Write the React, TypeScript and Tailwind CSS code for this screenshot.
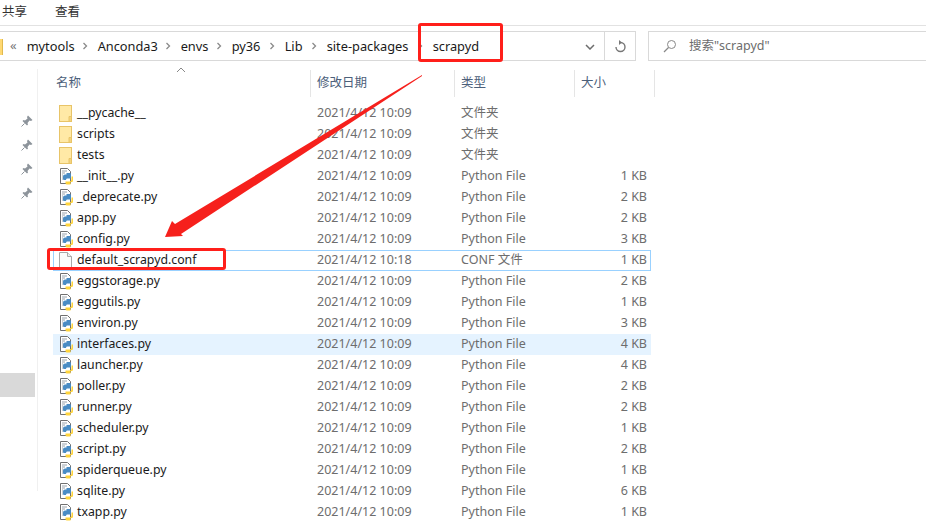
const rows: [string, string, string, string, string][] = [
  ["folder", "__pycache__", "2021/4/12 10:09", "文件夹", ""],
  ["folder", "scripts", "2021/4/12 10:09", "文件夹", ""],
  ["folder", "tests", "2021/4/12 10:09", "文件夹", ""],
  ["py", "__init__.py", "2021/4/12 10:09", "Python File", "1 KB"],
  ["py", "_deprecate.py", "2021/4/12 10:09", "Python File", "2 KB"],
  ["py", "app.py", "2021/4/12 10:09", "Python File", "2 KB"],
  ["py", "config.py", "2021/4/12 10:09", "Python File", "3 KB"],
  ["file", "default_scrapyd.conf", "2021/4/12 10:18", "CONF 文件", "1 KB"],
  ["py", "eggstorage.py", "2021/4/12 10:09", "Python File", "2 KB"],
  ["py", "eggutils.py", "2021/4/12 10:09", "Python File", "1 KB"],
  ["py", "environ.py", "2021/4/12 10:09", "Python File", "3 KB"],
  ["py", "interfaces.py", "2021/4/12 10:09", "Python File", "4 KB"],
  ["py", "launcher.py", "2021/4/12 10:09", "Python File", "4 KB"],
  ["py", "poller.py", "2021/4/12 10:09", "Python File", "2 KB"],
  ["py", "runner.py", "2021/4/12 10:09", "Python File", "2 KB"],
  ["py", "scheduler.py", "2021/4/12 10:09", "Python File", "1 KB"],
  ["py", "script.py", "2021/4/12 10:09", "Python File", "2 KB"],
  ["py", "spiderqueue.py", "2021/4/12 10:09", "Python File", "1 KB"],
  ["py", "sqlite.py", "2021/4/12 10:09", "Python File", "6 KB"],
  ["py", "txapp.py", "2021/4/12 10:09", "Python File", "1 KB"],
];
const crumbs: [string, string][] = [
  ["mytools", "w-[71px]"], ["Anconda3", "w-[83px]"], ["envs", "w-[51px]"], ["py36", "w-[53px]"],
  ["Lib", "w-[42px]"], ["site-packages", "w-[106px]"], ["scrapyd", "w-[70px]"],
];
function Folder() {
  return (
    <svg width="13" height="17" viewBox="0 0 13 17" className="shrink-0">
      <rect x="0.5" y="0.5" width="12" height="16" fill="#ffe9a6" stroke="#e8c468" />
      <path d="M10 16.500v-5h2.500v5z" fill="#f5d47e" stroke="#e8c468" />
    </svg>
  );
}
function Py() {
  return (
    <svg width="14" height="18" viewBox="0 0 14 18" className="shrink-0 ml-[1px]">
      <path d="M.5.5h7l3 3v12h-10z" fill="#fff" stroke="#707070" />
      <path d="M2 3h5M2 5h3M2 7h1M2 9h1M2 11h1" stroke="#9aa3ab" />
      <path d="M3 11V8.500Q3 6.500 5 6.500h1.500V5h3.500Q11 5 11 6.500V9.500Q11 10.500 10 10.500H7Q6 10.500 6 12H4Q3 12 3 11z" fill="#4a8cc4" />
      <path d="M13 8.500v4Q13 14 11.500 14H10.500v2.500H7Q5.500 16.500 5.500 15V13.500H9.500Q11.500 13.500 11.500 11.500V8.500z" fill="#ffd43b" />
    </svg>
  );
}
function Doc() {
  return (
    <svg width="13" height="17" viewBox="0 0 13 17" className="shrink-0">
      <path d="M.5.5h8l4 4v12h-12z" fill="#fbfbfb" stroke="#a8a8a8" />
      <path d="M8.500.5v4h4" fill="#eee" stroke="#a8a8a8" />
    </svg>
  );
}
function Pin() {
  return (
    <svg width="12" height="12" viewBox="0 0 12 12">
      <path d="M7 .5 11.500 5 10 6 8.500 5.500 6.500 8 7 9.500 6 10.500 1.500 6 2.500 5 4 5.500 6.500 3.500 6 2z" fill="#8d949b" />
      <path d="M3.500 8.500.5 11.500" stroke="#8d949b" />
    </svg>
  );
}
function Row({ row, index }: { row: (typeof rows)[number]; index: number }) {
  const [kind, name, date, type, size] = row;
  const state = index === 7 ? "border border-[#99d1ff]" : index === 11 ? "bg-[#e5f3ff] border border-[#e5f3ff]" : "border border-transparent";
  return (
    <div className={`flex items-center h-[21px] pl-[5px] ${state}`}>
      <div className="w-[18px] flex shrink-0">
        {kind === "folder" ? <Folder /> : kind === "py" ? <Py /> : <Doc />}
      </div>
      <span className="w-[240px] shrink-0 text-[12.300px] text-[#1a1a1a]">{name}</span>
      <span className="w-[144px] shrink-0 text-[#6d6d6d]">{date}</span>
      <span className="w-[100px] shrink-0 text-[#6d6d6d]">{type}</span>
      <span className="w-[86px] shrink-0 text-right text-[#6d6d6d]">{size}</span>
    </div>
  );
}
function HeaderCell({ label, w, pad }: { label: string; w: string; pad: string }) {
  return (
    <div className={`${w} ${pad} h-[27px] shrink-0 flex items-center text-[#4c607a] border-r border-[#e5e5e5]`}>
      {label}
    </div>
  );
}
export default function App() {
  return (
    <div className="relative w-[926px] h-[521px] overflow-hidden bg-white text-[12.500px] leading-none font-['Noto_Sans','Noto_Sans_CJK_SC',sans-serif]">
      <div className="h-[26px] flex items-center border-b border-[#e2e2e2] text-[#333]">
        <span className="ml-[2px]">共享</span>
        <span className="ml-[28px]">查看</span>
      </div>
      <div className="flex h-[30px] mt-[5px] text-[#1a1a1a]">
        <div className="w-[605px] flex items-center border border-l-0 border-[#d9d9d9] text-[12.800px] pt-[1px]">
          <div className="w-[3px] h-[16px] bg-[#ffd872] border-r border-[#e0b94e] shrink-0" />
          <span className="text-[#777] ml-[7px] mr-[10px] text-[13px] pb-[2px]">«</span>
          {crumbs.map(([c, w], i) => (
            <div key={c} className={`${w} flex items-center justify-between shrink-0`}>
              <span>{c}</span>
              {i < 6 && (
                <svg width="6" height="8" viewBox="0 0 6 8" className="mr-[10px]"><path d="M1.500 1 4.500 4 1.500 7" fill="none" stroke="#8a8a8a" strokeWidth="1.300" /></svg>
              )}
            </div>
          ))}
          <svg width="10" height="6" viewBox="0 0 10 6" className="ml-auto mr-[9px]"><path d="M1 1 5 5 9 1" fill="none" stroke="#6d6d6d" strokeWidth="1.500" /></svg>
        </div>
        <div className="w-[31px] flex items-center justify-center border border-l-0 border-[#d9d9d9]">
          <svg width="12" height="13" viewBox="0 0 12 13"><path d="M6.500 2.500A4.500 4.500 0 1 1 2 7" fill="none" stroke="#777" strokeWidth="1.400" /><path d="M5 0v5l3-2.500z" fill="#777" /></svg>
        </div>
        <div className="flex-1 ml-[12px] flex items-center border-t border-b border-l border-[#d9d9d9] pl-[14px] text-[#6d6d6d]">
          <svg width="14" height="14" viewBox="0 0 14 14"><circle cx="8.500" cy="5.500" r="4" fill="none" stroke="#888" /><path d="M5.500 8.500 1 13" stroke="#888" strokeWidth="1.200" /></svg>
          <span className="ml-[12px]">搜索"scrapyd"</span>
        </div>
      </div>
      <div className="flex">
        <div className="w-[38px] shrink-0 h-[430px] relative flex flex-col">
          <div className="absolute right-0 top-[8px] bottom-0 w-px bg-[#f0f0f0]" />
          <div className="flex flex-col items-end gap-[12px] pr-[5px] mt-[54px]">
            <Pin /><Pin /><Pin /><Pin />
          </div>
          <div className="mt-[174px] w-[35px] h-[24px] bg-[#d9d9d9]" />
        </div>
        <div className="w-[618px] pl-[15px]">
          <div className="relative flex mt-[9px] mb-[6px]">
            <svg width="10" height="6" viewBox="0 0 10 6" className="absolute left-[123px] -top-[3px]"><path d="M1 5 5 1 9 5" fill="none" stroke="#888" /></svg>
            <HeaderCell label="名称" w="w-[258px]" pad="pl-[3px]" />
            <HeaderCell label="修改日期" w="w-[144px]" pad="pl-[6px]" />
            <HeaderCell label="类型" w="w-[120px]" pad="pl-[6px]" />
            <HeaderCell label="大小" w="w-[80px]" pad="pl-[6px]" />
          </div>
          <div className="w-[598px]">
            {rows.map((r, i) => <Row key={r[1]} row={r} index={i} />)}
          </div>
        </div>
      </div>
      <div className="absolute left-[418px] top-[23px] w-[85px] h-[39px] border-[3px] border-[#ff1f1a] rounded-[3px]" />
      <div className="absolute left-[47px] top-[248px] w-[179px] h-[22px] border-[3px] border-[#ff1f1a] rounded-[3px]" />
      <svg width="926" height="521" className="absolute left-0 top-0 pointer-events-none">
        <polygon points="422,75 175,224 172,221 165,237 183,236 181,234 422,76" fill="#f6201c" />
      </svg>
    </div>
  );
}
